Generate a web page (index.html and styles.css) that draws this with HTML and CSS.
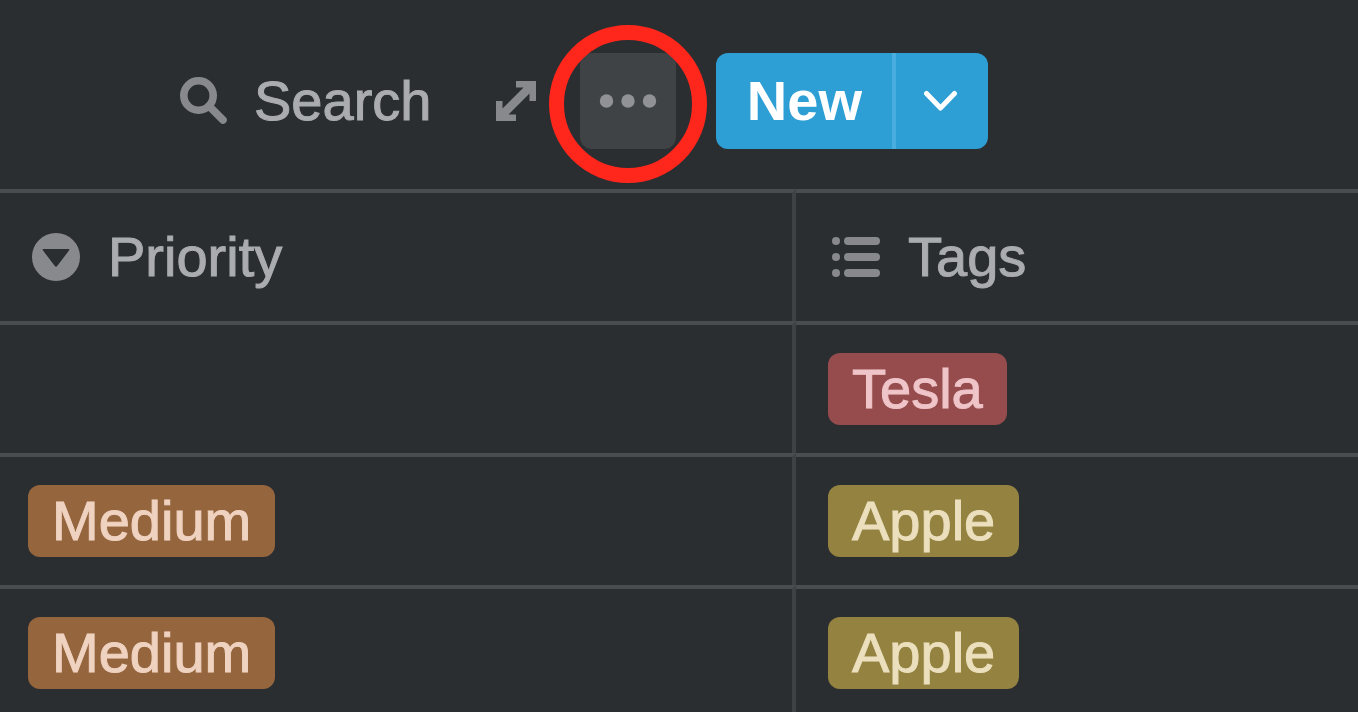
FILE: index.html
```html
<!DOCTYPE html>
<html lang="en">
<head>
<meta charset="utf-8">
<title>Database</title>
<link rel="stylesheet" href="styles.css">
</head>
<body>
<header class="toolbar">
  <button class="search" type="button">
    <svg class="search-icon" width="48" height="48" viewBox="0 0 48 48" aria-hidden="true"><circle cx="18.500" cy="18.500" r="14.700" fill="none" stroke="currentColor" stroke-width="7.600"/><path d="M29 29L43 43" stroke="currentColor" stroke-width="7.600" stroke-linecap="round"/></svg>
    <span>Search</span>
  </button>
  <button class="expand" type="button" aria-label="Expand">
    <svg width="40" height="40" viewBox="0 0 40 40" aria-hidden="true"><path d="M20 0H40V20H33.500V12.500L12.500 33.500H20V40H0V20H6.500V27.500L27.500 6.500H20Z" fill="currentColor"/></svg>
  </button>
  <div class="more-wrap">
    <button class="more" type="button" aria-label="More options">
      <svg width="58" height="14" viewBox="0 0 58 14" aria-hidden="true"><circle cx="7.500" cy="7" r="6.700"/><circle cx="29" cy="7" r="6.700"/><circle cx="50.500" cy="7" r="6.700"/></svg>
    </button>
    <span class="ring"></span>
  </div>
  <div class="new-group">
    <button class="new" type="button">New</button>
    <button class="new-menu" type="button" aria-label="New item options">
      <svg width="36" height="24" viewBox="0 0 36 24" aria-hidden="true"><path d="M2.500 4.500L16.500 19L30.500 4.500" fill="none" stroke="currentColor" stroke-width="5" stroke-linecap="round" stroke-linejoin="round"/></svg>
    </button>
  </div>
</header>
<table class="grid">
  <thead>
    <tr>
      <th class="priority" scope="col"><div class="heading">
        <svg width="48" height="48" viewBox="0 0 48 48" aria-hidden="true"><path fill="currentColor" fill-rule="evenodd" d="M24 0A24 24 0 1 0 24 48A24 24 0 1 0 24 0ZM11.500 16H36.500Q38 16 37 17.500L25.200 33Q24 34.500 22.800 33L11 17.500Q10 16 11.500 16Z"/></svg>
        <span>Priority</span></div></th>
      <th class="tags" scope="col"><div class="heading">
        <svg width="48" height="48" viewBox="0 0 48 48" aria-hidden="true" fill="currentColor"><circle cx="4" cy="8" r="4"/><circle cx="4" cy="24" r="4"/><circle cx="4" cy="40" r="4"/><rect x="12" y="4" width="36" height="8" rx="4"/><rect x="12" y="20" width="36" height="8" rx="4"/><rect x="12" y="36" width="36" height="8" rx="4"/></svg>
        <span>Tags</span></div></th>
    </tr>
  </thead>
  <tbody>
    <tr><td></td><td><span class="tag red">Tesla</span></td></tr>
    <tr><td><span class="tag orange">Medium</span></td><td><span class="tag yellow">Apple</span></td></tr>
    <tr><td><span class="tag orange">Medium</span></td><td><span class="tag yellow">Apple</span></td></tr>
  </tbody>
</table>
</body>
</html>
```
FILE: styles.css
```css
* { box-sizing: border-box; }
body {
  margin: 0;
  background: #2b2e31;
  color: #aaacaf;
  font: 56px/72px "Liberation Sans", Arial, sans-serif;
  overflow: hidden;
}
svg { display: block; flex: none; }
button {
  margin: 0;
  padding: 0;
  border: 0;
  background: none;
  color: inherit;
  font: inherit;
}
.toolbar {
  display: flex;
  align-items: center;
  padding: 53px 0 40px 180px;
}
.search { display: flex; align-items: center; gap: 26px; }
.search span, .heading span, .tag { -webkit-text-stroke: 1px currentColor; }
.search-icon, .expand, .heading svg { color: #87898c; }
.expand { margin-left: 65px; }
.more-wrap { position: relative; margin-left: 44px; }
.more {
  display: flex;
  align-items: center;
  justify-content: center;
  width: 96px;
  height: 96px;
  border-radius: 12px;
  background: #404346;
  fill: #909295;
}
.ring {
  position: absolute;
  inset: -28px -31px -34px;
  border: 15px solid #ff261b;
  border-radius: 50%;
  pointer-events: none;
}
.new-group {
  display: flex;
  height: 96px;
  margin-left: 40px;
  overflow: hidden;
  border-radius: 12px;
  background: #2d9fd5;
  color: #fff;
}
.new { width: 180px; border-right: 4px solid #4aade0; font-weight: bold; }
.new-menu { display: flex; align-items: center; justify-content: center; width: 92px; }
.grid {
  width: 100%;
  table-layout: fixed;
  border-spacing: 0;
}
.grid th, .grid td {
  height: 132px;
  padding: 0 32px;
  border-top: 4px solid #4a4d50;
  text-align: left;
  font-weight: normal;
  vertical-align: middle;
}
.grid .priority { width: 796px; }
.grid .tags { padding-left: 36px; }
.grid th:first-child, .grid td:first-child { border-right: 4px solid #3f4245; }
.grid td:first-child { padding-left: 28px; }
.heading { display: flex; align-items: center; gap: 28px; }
.tag {
  display: block;
  width: fit-content;
  padding: 0 24px;
  border-radius: 12px;
}
.red { background: #964c4d; color: #efc5c9; }
.orange { background: #95653e; color: #efd2c0; }
.yellow { background: #938240; color: #ebdfbd; }
```
